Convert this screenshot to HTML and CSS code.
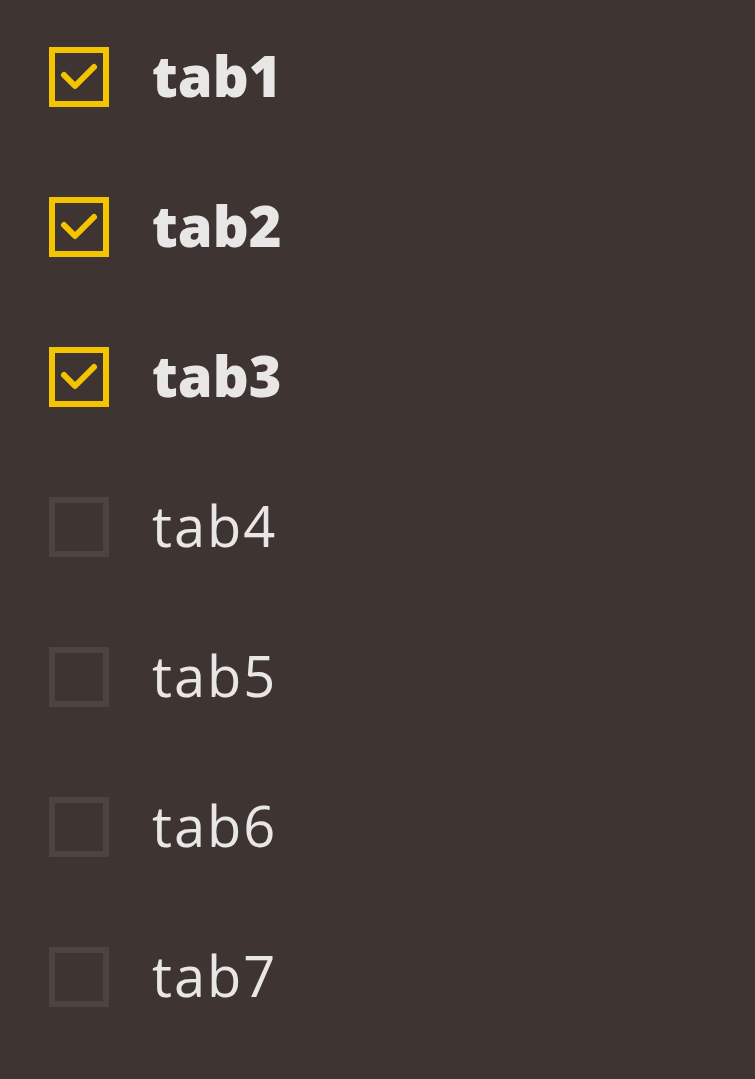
FILE: index.html
```html
<!DOCTYPE html>
<html>
<head>
<meta charset="utf-8">
<link rel="stylesheet" href="styles.css">
</head>
<body>
<ul class="list">
  <li class="item checked"><span class="box"><svg viewBox="0 0 48 48" width="48" height="48"><path d="M9 22 L20 33 L39 14" fill="none" stroke="#f5c400" stroke-width="6" stroke-linecap="round" stroke-linejoin="round"/></svg></span><span class="label">tab1</span></li>
  <li class="item checked"><span class="box"><svg viewBox="0 0 48 48" width="48" height="48"><path d="M9 22 L20 33 L39 14" fill="none" stroke="#f5c400" stroke-width="6" stroke-linecap="round" stroke-linejoin="round"/></svg></span><span class="label">tab2</span></li>
  <li class="item checked"><span class="box"><svg viewBox="0 0 48 48" width="48" height="48"><path d="M9 22 L20 33 L39 14" fill="none" stroke="#f5c400" stroke-width="6" stroke-linecap="round" stroke-linejoin="round"/></svg></span><span class="label">tab3</span></li>
  <li class="item"><span class="box"></span><span class="label">tab4</span></li>
  <li class="item"><span class="box"></span><span class="label">tab5</span></li>
  <li class="item"><span class="box"></span><span class="label">tab6</span></li>
  <li class="item"><span class="box"></span><span class="label">tab7</span></li>
</ul>
</body>
</html>
```
FILE: styles.css
```css
html, body {
  margin: 0;
  padding: 0;
  background: #3e3533;
  height: 100%;
}
.list {
  list-style: none;
  margin: 0;
  padding: 47px 0 0 49px;
  display: flex;
  flex-direction: column;
  gap: 90px;
}
.item {
  display: flex;
  align-items: center;
  height: 60px;
  gap: 43px;
}
.box {
  box-sizing: border-box;
  width: 60px;
  height: 60px;
  border: 6px solid #4d4442;
  display: flex;
  align-items: center;
  justify-content: center;
  flex: none;
}
.box svg {
  display: block;
}
.checked .box {
  border-color: #f5c400;
}
.label {
  font-family: "Open Sans", "Liberation Sans", sans-serif;
  font-size: 56px;
  color: #e9e7e5;
  letter-spacing: 2px;
  line-height: 56px;
  padding-bottom: 4px;
}
.checked .label {
  font-weight: 800;
  letter-spacing: 0;
}
```
